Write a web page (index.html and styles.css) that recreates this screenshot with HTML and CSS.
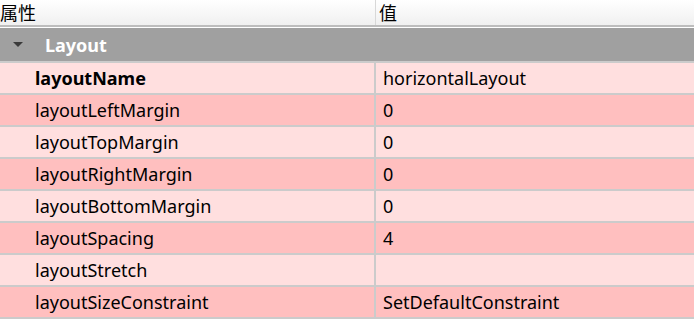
FILE: index.html
```html
<!DOCTYPE html>
<html>
<head>
<meta charset="utf-8">
<link rel="stylesheet" href="styles.css">
</head>
<body>
<div class="tree">
  <div class="header">
    <div class="hcell hname">属性</div>
    <div class="hcell hval">值</div>
  </div>
  <div class="group">
    <span class="arrow"></span>
    <span class="gtitle">Layout</span>
  </div>
  <div class="row light"><div class="name bold">layoutName</div><div class="val">horizontalLayout</div></div>
  <div class="row dark"><div class="name">layoutLeftMargin</div><div class="val">0</div></div>
  <div class="row light"><div class="name">layoutTopMargin</div><div class="val">0</div></div>
  <div class="row dark"><div class="name">layoutRightMargin</div><div class="val">0</div></div>
  <div class="row light"><div class="name">layoutBottomMargin</div><div class="val">0</div></div>
  <div class="row dark"><div class="name">layoutSpacing</div><div class="val">4</div></div>
  <div class="row light"><div class="name">layoutStretch</div><div class="val"></div></div>
  <div class="row dark"><div class="name">layoutSizeConstraint</div><div class="val">SetDefaultConstraint</div></div>
</div>
</body>
</html>
```
FILE: styles.css
```css
html, body { margin: 0; padding: 0; background: #ffffff; }
body {
  font-family: "Noto Sans", "Noto Sans CJK SC", sans-serif;
  font-size: 18px;
  color: #000;
  width: 694px;
  overflow: hidden;
}
.tree { display: flex; flex-direction: column; }
.header {
  display: grid;
  grid-template-columns: 376px 1fr;
  height: 25px;
  background: linear-gradient(#ffffff, #f0f0f0);
  border-bottom: 2px solid #bdbdbd;
}
.hcell {
  font-family: "Noto Sans CJK SC", sans-serif;
  font-size: 18px;
  line-height: 25px;
  color: #000;
}
.hname { padding-left: 0; border-right: 1px solid #d8d8d8; }
.hval { padding-left: 3px; }
.group {
  display: flex;
  align-items: center;
  height: 33px;
  border-top: 1px solid #ffffff;
  background: #a0a0a0;
  border-bottom: 2px solid #cbcbcb;
}
.arrow {
  width: 0; height: 0;
  margin-left: 13px;
  border-left: 5px solid transparent;
  border-right: 5px solid transparent;
  border-top: 5px solid #3a3a3a;
}
.gtitle {
  margin-left: 22px;
  color: #ffffff;
  font-weight: bold;
  font-size: 18px;
}
.row {
  display: grid;
  grid-template-columns: 376px 1fr;
  height: 30px;
  border-bottom: 2px solid #cbcbcb;
}
.row.light { background: #ffdfdf; }
.row.dark { background: #ffbfbf; }
.name {
  padding-left: 35px;
  line-height: 30px;
  border-right: 2px solid #cbcbcb;
}
.name.bold { font-weight: bold; }
.val { padding-left: 7px; line-height: 30px; }
```
